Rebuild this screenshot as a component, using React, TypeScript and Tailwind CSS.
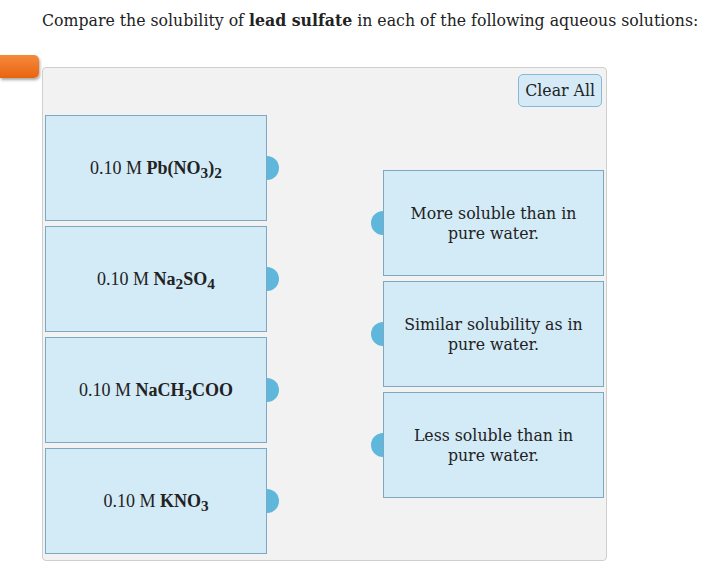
import React from "react";

const serif = { fontFamily: '"DejaVu Serif Condensed", "DejaVu Serif", serif', fontStretch: "condensed" as const };
const times = { fontFamily: '"Liberation Serif", "Times New Roman", serif' };

function Knob({ side }: { side: "left" | "right" }) {
  return side === "right" ? (
    <div className="absolute right-[-13px] top-1/2 -translate-y-1/2 w-[12px] h-[24px] rounded-r-full bg-[#5fb7dc]" />
  ) : (
    <div className="absolute left-[-13px] top-1/2 -translate-y-1/2 w-[12px] h-[24px] rounded-l-full bg-[#5fb7dc]" />
  );
}

const sub = "text-[0.85em] align-[-4px] leading-none";

const leftItems: React.ReactNode[] = [
  <>Pb(NO<span className={sub}>3</span>)<span className={sub}>2</span></>,
  <>Na<span className={sub}>2</span>SO<span className={sub}>4</span></>,
  <>NaCH<span className={sub}>3</span>COO</>,
  <>KNO<span className={sub}>3</span></>,
];

const rightItems: [string, string][] = [
  ["More soluble than in", "pure water."],
  ["Similar solubility as in", "pure water."],
  ["Less soluble than in", "pure water."],
];

export default function App() {
  return (
    <div className="w-[716px] h-[570px] bg-white overflow-hidden">
      <h1 className="h-[55px] pl-[42px] pt-[7px] text-[17.5px] leading-[26px] text-[#222] whitespace-nowrap" style={serif}>
        Compare the solubility of <b>lead sulfate</b> in each of the following aqueous solutions:
      </h1>

      <div className="flex items-start">
        {/* orange tab */}
        <div className="w-[39px] h-[23px] rounded-r-[5px] bg-gradient-to-b from-[#f58a3a] to-[#e8640c] shadow-[1px_2px_3px_rgba(0,0,0,0.35)]" />

        <div className="ml-[3px] mt-[12px] w-[565px] h-[494px] bg-[#f2f2f2] border border-[#cfcfcf] rounded-[4px] flex flex-col">
          <div className="flex justify-end pt-[6px] pr-[4px]">
            <button
              className="h-[33px] px-[6px] bg-[#d5eaf6] border border-[#86b9d3] rounded-[5px] text-[17.5px] text-[#222]"
              style={serif}
            >
              Clear All
            </button>
          </div>

          <div className="flex mt-[8px]">
            <div className="flex flex-col gap-[5px] ml-[2px] w-[222px]">
              {leftItems.map((p, i) => (
                <div
                  key={i}
                  className="relative h-[106px] bg-[#d3eaf7] border border-[#7ea8c1] flex items-center justify-center"
                >
                  <div className="text-[18px] text-[#222]" style={times}>
                    0.10 M <b>{p}</b>
                  </div>
                  <Knob side="right" />
                </div>
              ))}
            </div>

            <div className="flex flex-col gap-[5px] ml-[116px] mt-[55px] w-[221px]">
              {rightItems.map(([a, b], i) => (
                <div
                  key={i}
                  className="relative h-[106px] bg-[#d3eaf7] border border-[#7ea8c1] flex flex-col items-center pt-[32px] text-[17.5px] leading-[20px] text-[#222]"
                  style={serif}
                >
                  <span>{a}</span>
                  <span>{b}</span>
                  <Knob side="left" />
                </div>
              ))}
            </div>
          </div>
        </div>
      </div>
    </div>
  );
}
